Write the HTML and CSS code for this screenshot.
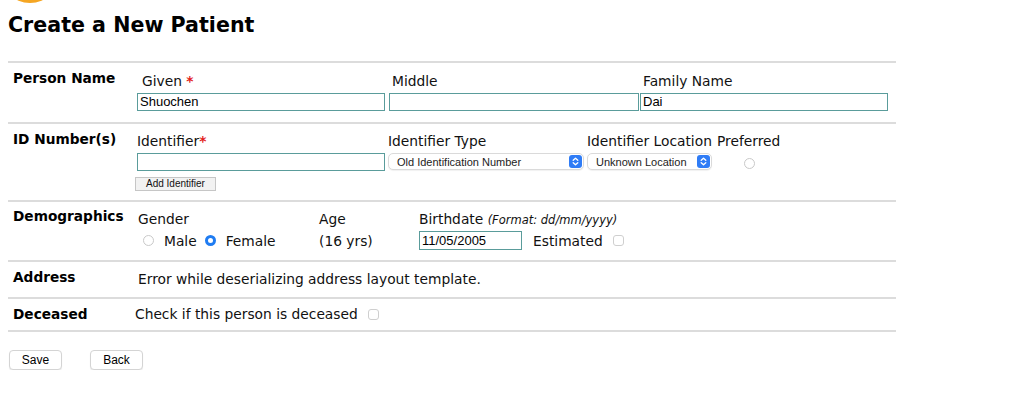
FILE: index.html
```html
<!DOCTYPE html>
<html>
<head>
<meta charset="utf-8">
<link rel="stylesheet" href="styles.css">
</head>
<body>
<div class="logo-strip"><div class="logo"></div></div>
<h1 class="title">Create a New Patient</h1>

<div class="form">
  <div class="section s-name">
    <div class="sec-label">Person Name</div>
    <div class="fields name-grid">
      <div class="fcol">
        <div class="flabel ind">Given <span class="req">*</span></div>
        <div class="input w248">Shuochen</div>
      </div>
      <div class="fcol">
        <div class="flabel ind">Middle</div>
        <div class="input w250"></div>
      </div>
      <div class="fcol">
        <div class="flabel ind">Family Name</div>
        <div class="input w248">Dai</div>
      </div>
    </div>
  </div>

  <div class="section s-id">
    <div class="sec-label">ID Number(s)</div>
    <div class="fields">
      <div class="id-grid">
        <div class="fcol">
          <div class="flabel">Identifier<span class="req">*</span></div>
          <div class="input w248"></div>
        </div>
        <div class="fcol">
          <div class="flabel">Identifier Type</div>
          <div class="select sel-type"><span>Old Identification Number</span>
            <svg class="chev" viewBox="0 0 13 13" width="13" height="13"><rect width="13" height="13" rx="3" fill="#2f7cf6"/><path d="M4.2 5.3 6.5 3.2 8.8 5.3M4.2 7.7 6.5 9.8 8.8 7.7" fill="none" stroke="#fff" stroke-width="1.3" stroke-linecap="round" stroke-linejoin="round"/></svg>
          </div>
        </div>
        <div class="fcol">
          <div class="flabel">Identifier Location</div>
          <div class="select sel-loc"><span>Unknown Location</span>
            <svg class="chev" viewBox="0 0 13 13" width="13" height="13"><rect width="13" height="13" rx="3" fill="#2f7cf6"/><path d="M4.2 5.3 6.5 3.2 8.8 5.3M4.2 7.7 6.5 9.8 8.8 7.7" fill="none" stroke="#fff" stroke-width="1.3" stroke-linecap="round" stroke-linejoin="round"/></svg>
          </div>
        </div>
        <div class="fcol">
          <div class="flabel">Preferred</div>
          <div class="pref-radio"><span class="radio"></span></div>
        </div>
      </div>
      <button class="small-btn">Add Identifier</button>
    </div>
  </div>

  <div class="section s-demo">
    <div class="sec-label">Demographics</div>
    <div class="fields demo-grid">
      <div class="fcol">
        <div class="flabel">Gender</div>
        <div class="line-row gender">
          <span class="radio"></span><span class="rtext male">Male</span>
          <span class="radio on"></span><span class="rtext">Female</span>
        </div>
      </div>
      <div class="fcol">
        <div class="flabel">Age</div>
        <div class="line-row">(16 yrs)</div>
      </div>
      <div class="fcol">
        <div class="flabel">Birthdate <span class="hint">(Format: dd/mm/yyyy)</span></div>
        <div class="line-row">
          <div class="input bdate">11/05/2005</div>
          <span class="est">Estimated</span><span class="check est-check"></span>
        </div>
      </div>
    </div>
  </div>

  <div class="section s-addr">
    <div class="sec-label">Address</div>
    <div class="fields addr-text">Error while deserializing address layout template.</div>
  </div>

  <div class="section s-dec">
    <div class="sec-label">Deceased</div>
    <div class="fields dec-text"><span>Check if this person is deceased</span><span class="check dec-check"></span></div>
  </div>
</div>

<div class="actions">
  <button class="btn">Save</button>
  <button class="btn">Back</button>
</div>
</body>
</html>
```

FILE: styles.css
```css
html, body {
  background: #fff;
}
body {
  margin: 0 8px;
  font-family: "DejaVu Sans", Verdana, sans-serif;
  font-size: 13.8px;
  color: #111;
}
.logo-strip {
  height: 3px;
  overflow: hidden;
  margin-left: -8px;
}
.logo {
  width: 60px;
  height: 60px;
  margin-top: -57px;
  border-radius: 50%;
  background: #f5a623;
}
.title {
  margin: 10px 0 24px 0;
  font-size: 20.6px;
  line-height: 24px;
  font-weight: bold;
  color: #000;
}
.form {
  width: 888px;
  border-bottom: 2px solid #dcdcdc;
}
.section {
  display: grid;
  grid-template-columns: 129px 1fr;
  border-top: 2px solid #dcdcdc;
}
.sec-label {
  padding: 7px 0 0 5px;
  font-weight: bold;
  font-size: 13.7px;
  line-height: 16px;
  color: #000;
}
.fields {
  padding-top: 10px;
}
.flabel {
  height: 16px;
  line-height: 16px;
  margin-bottom: 4px;
  white-space: nowrap;
}
.flabel.ind {
  padding-left: 3px;
}
.s-name .fcol:first-child .flabel.ind { padding-left: 5px; }
.req {
  color: #e21b1b;
  font-weight: bold;
}
.input {
  box-sizing: border-box;
  height: 18px;
  border: 1px solid #5a9c9b;
  font-family: "Liberation Sans", Arial, sans-serif;
  font-size: 13px;
  line-height: 16px;
  padding-left: 2px;
  background: #fff;
  color: #000;
}
.w248 { width: 248px; }
.w250 { width: 250px; }

/* name row */
.s-name .fields { padding-bottom: 11px; }
.name-grid {
  display: grid;
  grid-template-columns: 252px 251px 251px;
}

/* id row */
.s-id .fields { padding-top: 9px; padding-bottom: 9px; }
.id-grid {
  display: grid;
  grid-template-columns: 251px 199px 130px 60px;
}
.select {
  box-sizing: border-box;
  display: flex;
  align-items: center;
  justify-content: space-between;
  height: 17px;
  border: 1px solid #dadada;
  border-radius: 5px;
  background: #fff;
  font-family: "Liberation Sans", Arial, sans-serif;
  font-size: 11px;
  color: #222;
  padding: 0 1px 0 8px;
  box-shadow: 0 1px 1px rgba(0,0,0,0.06);
}
.sel-type { width: 196px; }
.sel-loc { width: 125px; }
.chev { display: block; }
.pref-radio {
  display: flex;
  align-items: center;
  height: 18px;
  padding: 2px 0 0 27px;
  box-sizing: border-box;
}
.radio {
  display: inline-block;
  box-sizing: border-box;
  width: 11px;
  height: 11px;
  border: 1px solid #c9c9c9;
  border-radius: 50%;
  background: #fff;
  flex: none;
}
.radio.on {
  border: 3px solid #1f7cf2;
  background: #fff;
}
.small-btn {
  display: block;
  margin: 6px 0 0 -2px;
  height: 14px;
  padding: 0 10px;
  border: 1px solid #c6c6c6;
  background: #f2f2f2;
  font-family: "Liberation Sans", Arial, sans-serif;
  font-size: 10px;
  line-height: 12px;
  color: #111;
}

/* demographics */
.s-demo .sec-label { padding-top: 6px; }
.s-demo .fields { padding-top: 9px; padding-bottom: 10px; padding-left: 1px; }
.demo-grid {
  display: grid;
  grid-template-columns: 181px 100px auto;
}
.line-row {
  display: flex;
  align-items: center;
  height: 19px;
  white-space: nowrap;
}
.gender .radio:first-child { margin-left: 5px; }
.rtext { margin-left: 10px; }
.rtext.male { margin-right: 8px; }
.hint {
  font-style: italic;
  font-size: 11.5px;
}
.bdate {
  width: 103px;
  height: 19px;
  line-height: 17px;
  margin-right: 11px;
}
.check {
  display: inline-block;
  box-sizing: border-box;
  width: 11px;
  height: 11px;
  border: 1px solid #cfcfcf;
  border-radius: 3px;
  background: #fff;
  flex: none;
}
.est-check { margin-left: 10px; }

/* address */
.addr-text {
  padding-top: 9px;
  padding-bottom: 10px;
  line-height: 16px;
  padding-left: 1px;
}

/* deceased */
.dec-text {
  display: flex;
  align-items: center;
  padding-top: 7px;
  padding-bottom: 8px;
  line-height: 16px;
  margin-left: -2px;
}
.dec-check { margin-left: 10px; }

.actions {
  display: flex;
  gap: 28px;
  padding: 18px 0 0 1px;
}
.btn {
  box-sizing: border-box;
  width: 53px;
  height: 20px;
  border: 1px solid #d4d4d4;
  border-radius: 4px;
  background: #fff;
  font-family: "Liberation Sans", Arial, sans-serif;
  font-size: 12px;
  color: #000;
  box-shadow: 0 1px 1px rgba(0,0,0,0.08);
}
```
